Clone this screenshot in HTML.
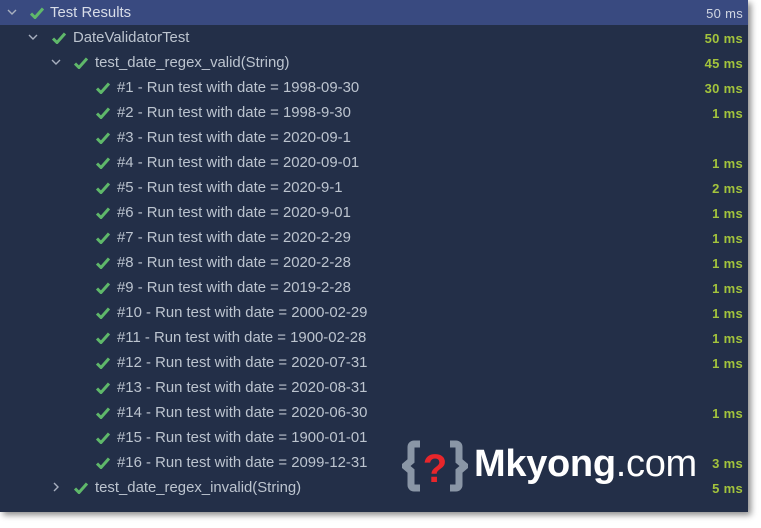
<!DOCTYPE html>
<html><head><style>
body{margin:0;width:761px;height:528px;background:#fff;overflow:hidden;font-family:"Liberation Sans",sans-serif}
.p{position:absolute;left:0;top:0;width:748px;height:512px;background:#232f48;box-shadow:3px 3px 6px rgba(0,0,0,.45)}
.r{position:absolute;left:0;width:748px;height:25px;line-height:27px;font-size:14.9px;color:#bcc4cf;white-space:nowrap}
.r.h{background:#394a80;color:#d8dde8}
.ms{position:absolute;right:5px;top:0;font-size:13px;font-weight:bold;color:#a3c43c;letter-spacing:.3px}
.h .ms{font-weight:normal;color:#d0d6e2}
.ck{position:absolute;top:7px;width:14px;height:12px}
.ar{position:absolute;top:6px;width:12px;height:12px}
.t{position:absolute;top:0}
</style></head><body><div class="p">
<div class="r h" style="top:0"><svg class="ar" style="left:6px" viewBox="0 0 12 12"><path d="M2 4l4 4 4-4" fill="none" stroke="#a8b0bf" stroke-width="1.4"/></svg><svg class="ck" style="left:30px" viewBox="0 0 14 12"><path d="M1 6.5l4 4L13 1.5" fill="none" stroke="#5fb86a" stroke-width="3"/></svg><span class="t" style="left:50px">Test Results</span><span class="ms">50 ms</span></div>
<div class="r" style="top:25px"><svg class="ar" style="left:27px" viewBox="0 0 12 12"><path d="M2 4l4 4 4-4" fill="none" stroke="#a8b0bf" stroke-width="1.4"/></svg><svg class="ck" style="left:52px" viewBox="0 0 14 12"><path d="M1 6.5l4 4L13 1.5" fill="none" stroke="#5fb86a" stroke-width="3"/></svg><span class="t" style="left:73px">DateValidatorTest</span><span class="ms">50 ms</span></div>
<div class="r" style="top:50px"><svg class="ar" style="left:50px" viewBox="0 0 12 12"><path d="M2 4l4 4 4-4" fill="none" stroke="#a8b0bf" stroke-width="1.4"/></svg><svg class="ck" style="left:74px" viewBox="0 0 14 12"><path d="M1 6.5l4 4L13 1.5" fill="none" stroke="#5fb86a" stroke-width="3"/></svg><span class="t" style="left:95px">test_date_regex_valid(String)</span><span class="ms">45 ms</span></div>
<div id="rows"></div>
<div class="r" style="top:475px"><svg class="ar" style="left:50px" viewBox="0 0 12 12"><path d="M4 2l4 4-4 4" fill="none" stroke="#a8b0bf" stroke-width="1.4"/></svg><svg class="ck" style="left:74px" viewBox="0 0 14 12"><path d="M1 6.5l4 4L13 1.5" fill="none" stroke="#5fb86a" stroke-width="3"/></svg><span class="t" style="left:95px">test_date_regex_invalid(String)</span><span class="ms">5 ms</span></div>
<div style="position:absolute;left:402px;top:440px;width:70px;height:52px">
<svg width="66" height="52" viewBox="0 0 66 52"><path d="M18 4h-6a3 3 0 0 0-3 3v14l-6 5 6 5v14a3 3 0 0 0 3 3h6M48 4h6a3 3 0 0 1 3 3v14l6 5-6 5v14a3 3 0 0 1-3 3h-6" fill="none" stroke="#8a96a6" stroke-width="7"/><text x="33" y="42" text-anchor="middle" font-family="Liberation Sans" font-weight="bold" font-size="40" fill="#e8262b">?</text></svg></div>
<div style="position:absolute;left:474px;top:443px;font-size:38px;color:#fff;letter-spacing:-0.3px"><b>Mkyong</b><span>.com</span></div>
</div>
<script>
var d=[["1998-09-30","30 ms"],["1998-9-30","1 ms"],["2020-09-1",""],["2020-09-01","1 ms"],["2020-9-1","2 ms"],["2020-9-01","1 ms"],["2020-2-29","1 ms"],["2020-2-28","1 ms"],["2019-2-28","1 ms"],["2000-02-29","1 ms"],["1900-02-28","1 ms"],["2020-07-31","1 ms"],["2020-08-31",""],["2020-06-30","1 ms"],["1900-01-01",""],["2099-12-31","3 ms"]];
var h="";d.forEach(function(x,i){h+='<div class="r" style="top:'+(75+i*25)+'px"><svg class="ck" style="left:96px" viewBox="0 0 14 12"><path d="M1 6.5l4 4L13 1.5" fill="none" stroke="#5fb86a" stroke-width="3"/></svg><span class="t" style="left:117px">#'+(i+1)+' - Run test with date = '+x[0]+'</span><span class="ms">'+x[1]+'</span></div>';});
document.getElementById("rows").innerHTML=h;
</script>
</body></html>
